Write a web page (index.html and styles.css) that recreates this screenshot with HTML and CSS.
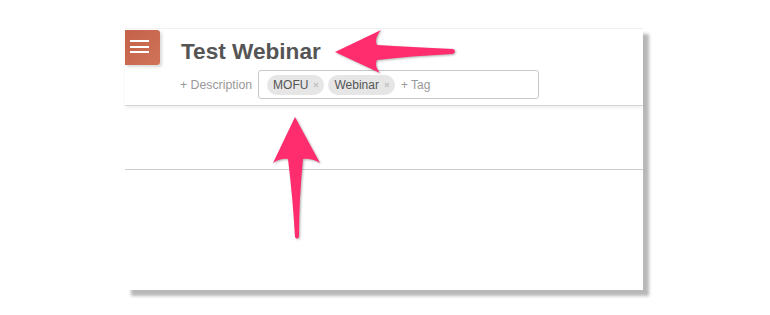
FILE: index.html
```html
<!DOCTYPE html>
<html>
<head>
<meta charset="utf-8">
<link rel="stylesheet" href="styles.css">
</head>
<body>
<div class="page">
  <div class="card">
    <div class="header">
      <div class="menu-btn"><span></span><span></span><span></span></div>
      <div class="head-main">
        <div class="title">Test Webinar</div>
        <div class="meta-row">
          <span class="desc">+ Description</span>
          <div class="tag-box">
            <span class="pill">MOFU<svg class="x" width="6" height="6" viewBox="0 0 6 6"><path d="M1 1L5 5M5 1L1 5" stroke="#c4c4c4" stroke-width="1.3"/></svg></span>
            <span class="pill">Webinar<svg class="x" width="6" height="6" viewBox="0 0 6 6"><path d="M1 1L5 5M5 1L1 5" stroke="#c4c4c4" stroke-width="1.3"/></svg></span>
            <span class="add-tag">+ Tag</span>
          </div>
        </div>
      </div>
    </div>
    <div class="section"></div>
  </div>
</div>
<svg class="arrows" width="770" height="315" viewBox="0 0 770 315">
  <path d="M335,52 L381,30 Q374,39 377,45 Q410,47 453,49 Q457,51 453,54 Q410,56 377,60 Q374,66 380,73 Z" fill="#ff2d6e"/>
  <path d="M295,117 L320,163 Q311,158 303,159 Q299,200 299,237 Q297,240 295,237 Q293,200 288,159 Q281,158 273,163 Z" fill="#ff2d6e"/>
</svg>
</body>
</html>
```
FILE: styles.css
```css
html, body {
  margin: 0;
  padding: 0;
  background: #ffffff;
  font-family: "Liberation Sans", Arial, sans-serif;
}
.page {
  padding: 28px 0 25px 125px;
  height: 315px;
  box-sizing: border-box;
  overflow: hidden;
}
.card {
  width: 518px;
  height: 262px;
  box-sizing: border-box;
  background: #ffffff;
  border-top: 1px solid #f1f1f1;
  box-shadow: 6px 6px 3px rgba(0, 0, 0, 0.28);
}
.header {
  display: flex;
  height: 77px;
  box-sizing: border-box;
  border-bottom: 1px solid #d6d6d6;
  box-shadow: 0 2px 3px rgba(0, 0, 0, 0.06);
}
.menu-btn {
  margin-top: 1px;
  width: 35px;
  height: 35px;
  box-sizing: border-box;
  padding: 10px 0 0 5px;
  background: linear-gradient(135deg, #c4624a, #cf7357);
  border-radius: 0 3px 3px 0;
  box-shadow: 2px 2px 3px rgba(0, 0, 0, 0.15);
  display: flex;
  flex-direction: column;
  gap: 3.5px;
}
.menu-btn span {
  display: block;
  width: 19px;
  height: 2px;
  background: #ffffff;
}
.head-main {
  margin-left: 21px;
  display: flex;
  flex-direction: column;
}
.title {
  margin-top: 10px;
  font-size: 22.6px;
  line-height: 26px;
  font-weight: 700;
  color: #555555;
}
.meta-row {
  margin-top: 5px;
  margin-left: -1px;
  display: flex;
  align-items: center;
}
.desc {
  font-size: 12.3px;
  color: #999999;
  margin-right: 6px;
}
.tag-box {
  width: 281px;
  height: 29px;
  box-sizing: border-box;
  border: 1px solid #c8c8c8;
  border-radius: 3px;
  padding-left: 8px;
  display: flex;
  align-items: center;
  gap: 4px;
}
.pill {
  height: 20px;
  box-sizing: border-box;
  padding: 0 5px 0 6px;
  border-radius: 10px;
  background: #e6e6e6;
  color: #555555;
  font-size: 12px;
  display: flex;
  align-items: center;
  gap: 5px;
}
.add-tag {
  margin-left: 2px;
  font-size: 12px;
  color: #999999;
}
.section {
  height: 64px;
  box-sizing: border-box;
  border-bottom: 1px solid #cccccc;
}
.arrows {
  position: absolute;
  left: 0;
  top: 0;
  filter: drop-shadow(1px 1px 1px rgba(0, 0, 0, 0.3));
}
```
